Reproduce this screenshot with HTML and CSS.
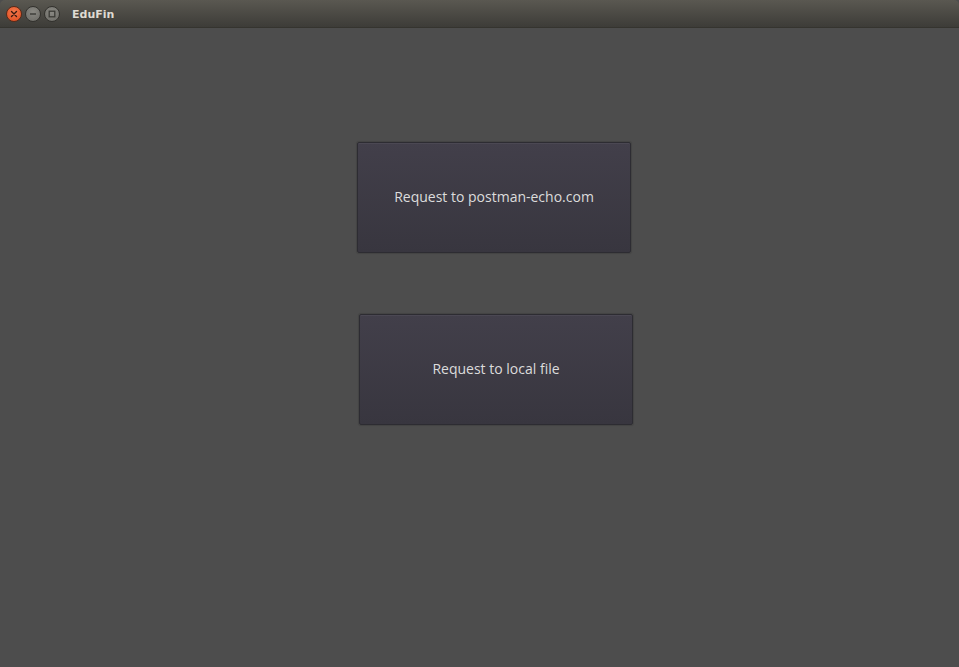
FILE: index.html
```html
<!DOCTYPE html>
<html>
<head>
<meta charset="utf-8">
<title>EduFin</title>
<link rel="stylesheet" href="styles.css">
</head>
<body>
<div class="window">
  <header class="titlebar">
    <div class="controls">
      <span class="ctl close">
        <svg width="8" height="8" viewBox="0 0 8 8"><path d="M1.5 1.5 L6.5 6.5 M6.5 1.5 L1.5 6.5" stroke="#3a1a10" stroke-width="1.4" stroke-linecap="round"/></svg>
      </span>
      <span class="ctl">
        <svg width="8" height="8" viewBox="0 0 8 8"><path d="M1 4 H7" stroke="#3a3a36" stroke-width="1.4"/></svg>
      </span>
      <span class="ctl">
        <svg width="8" height="8" viewBox="0 0 8 8"><rect x="1.2" y="1.2" width="5.6" height="5.6" fill="none" stroke="#3a3a36" stroke-width="1.3"/></svg>
      </span>
    </div>
    <span class="title">EduFin</span>
  </header>
  <main class="content">
    <button class="btn btn-one">Request to postman-echo.com</button>
    <button class="btn btn-two">Request to local file</button>
  </main>
</div>
</body>
</html>
```
FILE: styles.css
```css
html, body {
  margin: 0;
  padding: 0;
  width: 959px;
  height: 667px;
  overflow: hidden;
  background: #4d4d4d;
}
.window {
  display: flex;
  flex-direction: column;
  height: 667px;
}
.titlebar {
  height: 27px;
  flex: none;
  display: flex;
  align-items: center;
  background: linear-gradient(#5a5851, #3d3c38);
  border-bottom: 1px solid #35342f;
  border-radius: 5px 5px 0 0;
}
.controls {
  display: flex;
  gap: 3px;
  margin-left: 6px;
  padding-top: 1px;
}
.ctl {
  width: 16px;
  height: 16px;
  border-radius: 50%;
  background: radial-gradient(circle at 50% 35%, #8a8983, #6b6a65);
  border: 0.5px solid #33322e;
  box-sizing: border-box;
  display: flex;
  align-items: center;
  justify-content: center;
}
.ctl.close {
  background: radial-gradient(circle at 50% 35%, #f47a4e, #df4a1d);
  border-color: #5a2a18;
}
.title {
  margin-left: 12px;
  padding-top: 2px;
  font-family: "DejaVu Sans", sans-serif;
  font-weight: bold;
  font-size: 11px;
  color: #dfdbd2;
}
.content {
  flex: 1;
  display: flex;
  flex-direction: column;
  padding-top: 114px;
}
.btn {
  width: 274px;
  height: 111px;
  box-sizing: border-box;
  background: linear-gradient(#423f4a, #38363f);
  border: 1px solid #2d2c32;
  border-radius: 2px;
  box-shadow: 0 0 1px 1px rgba(0,0,0,0.12), inset 0 1px 0 rgba(255,255,255,0.05);
  color: #dcdcdc;
  font-family: "Open Sans", sans-serif;
  font-size: 14px;
  padding: 0 0 3px 0;
  cursor: pointer;
}
.btn-one {
  margin-left: 357px;
}
.btn-two {
  margin-left: 359px;
  margin-top: 61px;
}
```
